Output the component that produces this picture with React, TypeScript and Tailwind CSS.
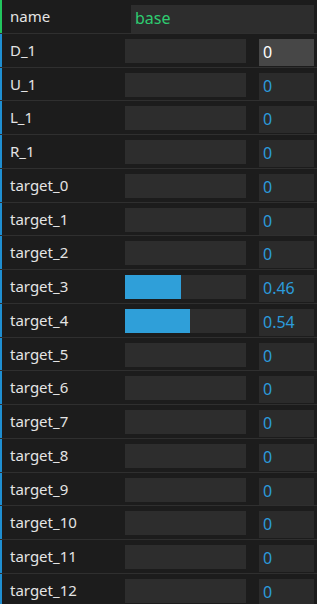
import React from 'react';

type Row = { label: string; value: number; focused?: boolean };

const rows: Row[] = [
  { label: 'D_1', value: 0, focused: true },
  { label: 'U_1', value: 0 },
  { label: 'L_1', value: 0 },
  { label: 'R_1', value: 0 },
  ...Array.from({ length: 13 }, (_, i) => ({
    label: `target_${i}`,
    value: i === 3 ? 0.46 : i === 4 ? 0.54 : 0,
  })),
];

function SliderRow({ row }: { row: Row }) {
  return (
    <div className="flex h-[33.75px] box-border border-b border-[#2f2f2f]">
      <div className="w-[2px] shrink-0 bg-[#1f8fd2]" />
      <div className="w-[123px] shrink-0 pl-[8px] pt-[6px] text-[15px] leading-[20px] text-[#e4e4e4]">
        {row.label}
      </div>
      <div className="pt-[5px]">
        <div className="w-[121px] h-[24px] bg-[#2d2d2d]">
          <div className="h-full bg-[#2f9fd9]" style={{ width: `${row.value * 100}%` }} />
        </div>
      </div>
      <div className="pt-[5px] ml-[13px]">
        <div
          className={`w-[55px] h-[27px] pl-[4px] pt-[3px] text-[16px] leading-[20px] ${
            row.focused ? 'bg-[#474747] text-white' : 'bg-[#2b2b2b] text-[#2b9bdc]'
          }`}
        >
          {row.value}
        </div>
      </div>
    </div>
  );
}

export default function App() {
  return (
    <div className="w-[317px] h-[604px] overflow-hidden bg-[#1c1c1c] font-['Noto_Sans',sans-serif]">
      <div className="flex h-[33.75px] box-border border-b border-[#2f2f2f]">
        <div className="w-[2px] shrink-0 bg-[#22c55e]" />
        <div className="w-[129px] shrink-0 pl-[8px] pt-[6px] text-[15px] leading-[20px] text-[#e4e4e4]">
          name
        </div>
        <div className="pt-[5px]">
          <div className="w-[183px] h-[28px] bg-[#2d2d2d] pl-[4px] pt-[3px] text-[16px] leading-[20px] text-[#2ecc71]">
            base
          </div>
        </div>
      </div>
      {rows.map(r => (
        <SliderRow key={r.label} row={r} />
      ))}
    </div>
  );
}
